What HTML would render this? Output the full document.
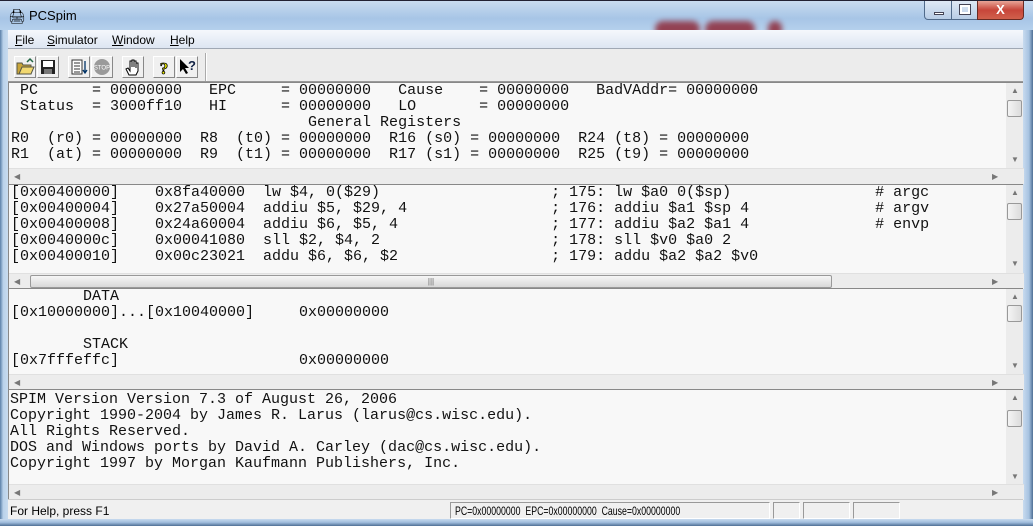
<!DOCTYPE html>
<html><head><meta charset="utf-8">
<style>
*{margin:0;padding:0;box-sizing:border-box}
body{width:1033px;height:526px;overflow:hidden;background:#a9c6e4;font-family:"Liberation Sans",sans-serif;position:relative}
.abs{position:absolute}
#title{left:0;top:0;width:1033px;height:30px;background:linear-gradient(#c9dcf0,#a7c5e6 60%,#b5d0ec);border-top:1px solid #223;overflow:hidden}
#frameL{left:0;top:30px;width:8px;height:496px;background:linear-gradient(90deg,#5a7fa8,#b9d1ea 40%,#c8dbef)}
#frameR{left:1023px;top:30px;width:10px;height:496px;background:linear-gradient(90deg,#c8dbef,#a6c2e0 60%,#4e6f95)}
#frameB{left:0;top:519px;width:1033px;height:7px;background:linear-gradient(#c8dbef,#9fbcdc,#4e6f95)}
#menu{left:8px;top:30px;width:1015px;height:19px;background:linear-gradient(#f5f8fc,#dde6f2);border-bottom:1px solid #a0a8b4;font-size:12px;color:#000}
#menu span{position:absolute;top:3px}
#tool{left:8px;top:49px;width:1015px;height:33px;background:#ececec;border-bottom:1px solid #999}
.btn{position:absolute;top:7px;width:22px;height:22px;background:#f0f0f0;border:1px solid;border-color:#fff #888 #888 #fff}
.pane{position:absolute;left:8px;width:1015px;background:#f8f8f8;border-left:1px solid #888;border-top:1px solid #888}
.txt{position:absolute;left:2px;font-family:"Liberation Mono",monospace;font-size:15px;line-height:16px;white-space:pre;color:#111}
.vs{position:absolute;right:0;top:0;width:17px;background:#ececec}
.hs{position:absolute;left:0;width:1015px;height:16px;background:#ececec;border-top:1px solid #e0e0e0}
.arr{position:absolute;font-size:8px;color:#777}
.thumb{position:absolute;right:1px;width:15px;height:17px;background:linear-gradient(90deg,#f4f4f4,#dcdcdc);border:1px solid #999;border-radius:2px}
#status{left:8px;top:499px;width:1015px;height:20px;background:#f0f0f0;border-top:1px solid #ccc;font-size:12px}
.cell{position:absolute;top:2px;height:17px;border:1px solid;border-color:#999 #fff #fff #999}
</style></head><body>
<div id="title" class="abs">
 <div class="abs" style="left:8px;top:7px;font-size:14px">&#x1F5A8;</div>
 <div class="abs" style="left:29px;top:7px;font-size:13px;color:#000">PCSpim</div>
 <div class="abs" style="left:655px;top:20px;width:45px;height:16px;background:#8b1f2d;border-radius:8px;filter:blur(3px);opacity:.8"></div>
 <div class="abs" style="left:705px;top:20px;width:50px;height:16px;background:#8b1f2d;border-radius:8px;filter:blur(3px);opacity:.8"></div>
 <div class="abs" style="left:768px;top:20px;width:14px;height:16px;background:#8b1f2d;border-radius:7px;filter:blur(3px);opacity:.8"></div>
 <div class="abs" style="left:924px;top:0;width:28px;height:19px;border:1px solid #506a8a;border-top:none;border-radius:0 0 0 4px;background:linear-gradient(#dfe9f5,#b8cde6)"><div class="abs" style="left:9px;top:11px;width:10px;height:3px;background:#fff;border:1px solid #445"></div></div>
 <div class="abs" style="left:951px;top:0;width:27px;height:19px;border:1px solid #506a8a;border-top:none;background:linear-gradient(#dfe9f5,#b8cde6)"><div class="abs" style="left:8px;top:4px;width:10px;height:9px;border:2px solid #fff;outline:1px solid #445"></div></div>
 <div class="abs" style="left:977px;top:0;width:47px;height:19px;border:1px solid #6a2a22;border-top:none;border-radius:0 0 4px 0;background:linear-gradient(#e8a597,#c7463a 50%,#d0604c);color:#fff;font-weight:bold;font-size:13px;text-align:center;line-height:17px">X</div>
</div>
<div id="frameL" class="abs"></div><div id="frameR" class="abs"></div><div id="frameB" class="abs"></div>
<div id="menu" class="abs">
 <span style="left:7px"><u>F</u>ile</span><span style="left:39px"><u>S</u>imulator</span><span style="left:104px"><u>W</u>indow</span><span style="left:162px"><u>H</u>elp</span>
</div>
<div id="tool" class="abs">
 <div class="btn" style="left:6px"><svg width="20" height="20"><path d="M2 6h5l1 2h8v9H2z" fill="#c9a53a" stroke="#554"/><path d="M4 17l3-7h12l-3 7z" fill="#f2d870" stroke="#554"/><path d="M12 5l3-3 3 3" fill="none" stroke="#264" stroke-width="1.5"/></svg></div>
 <div class="btn" style="left:29px"><svg width="20" height="20"><rect x="3" y="3" width="14" height="14" fill="#222"/><rect x="5" y="4" width="10" height="6" fill="#fff"/><rect x="6" y="12" width="8" height="5" fill="#777"/></svg></div>
 <div class="btn" style="left:60px"><svg width="20" height="20"><rect x="3" y="3" width="10" height="14" fill="#fff" stroke="#333"/><path d="M5 6h6M5 9h6M5 12h6M5 15h6" stroke="#333"/><path d="M16 4v12M14 13l2 3 2-3" stroke="#036" fill="none" stroke-width="1.3"/></svg></div>
 <div class="btn" style="left:83px"><svg width="20" height="20"><circle cx="10" cy="10" r="8" fill="#9a9a9a"/><text x="10" y="12.5" font-size="6" fill="#fff" text-anchor="middle" font-family="Liberation Sans">STOP</text></svg></div>
 <div class="btn" style="left:114px"><svg width="20" height="20"><path d="M6 18l-3-6 2-1 2 3V4h2v6V3h2v7V4h2v7V6h2v8l-2 4z" fill="#fff" stroke="#000"/></svg></div>
 <div class="btn" style="left:145px"><svg width="20" height="20"><text x="10" y="17" font-size="17" font-weight="bold" fill="#ee0" stroke="#000" stroke-width=".8" text-anchor="middle" font-family="Liberation Serif">?</text></svg></div>
 <div class="btn" style="left:168px"><svg width="20" height="20"><path d="M3 2v13l3-3 3 5 2-1-3-5h4z" fill="#000"/><text x="15" y="13" font-size="13" font-weight="bold" fill="#124" text-anchor="middle" font-family="Liberation Sans">?</text></svg></div>
 <div class="abs" style="left:197px;top:4px;width:2px;height:28px;border-left:1px solid #aaa;border-right:1px solid #fff"></div>
</div>

<div class="pane" style="top:82px;height:102px">
 <div class="txt" style="top:0px"> PC      = 00000000   EPC     = 00000000   Cause    = 00000000   BadVAddr= 00000000
 Status  = 3000ff10   HI      = 00000000   LO       = 00000000
                                 General Registers
R0  (r0) = 00000000  R8  (t0) = 00000000  R16 (s0) = 00000000  R24 (t8) = 00000000
R1  (at) = 00000000  R9  (t1) = 00000000  R17 (s1) = 00000000  R25 (t9) = 00000000</div>
 <div class="vs" style="height:85px"><span class="arr" style="left:5px;top:3px">&#9650;</span><div class="thumb" style="top:17px"></div><span class="arr" style="left:5px;top:72px">&#9660;</span></div>
 <div class="hs" style="top:85px"><span class="arr" style="left:5px;top:3px">&#9664;</span><span class="arr" style="left:983px;top:3px">&#9654;</span></div>
</div>
<div class="pane" style="top:184px;height:104px">
 <div class="txt" style="top:0px">[0x00400000]    0x8fa40000  lw $4, 0($29)                   ; 175: lw $a0 0($sp)                # argc
[0x00400004]    0x27a50004  addiu $5, $29, 4                ; 176: addiu $a1 $sp 4              # argv
[0x00400008]    0x24a60004  addiu $6, $5, 4                 ; 177: addiu $a2 $a1 4              # envp
[0x0040000c]    0x00041080  sll $2, $4, 2                   ; 178: sll $v0 $a0 2
[0x00400010]    0x00c23021  addu $6, $6, $2                 ; 179: addu $a2 $a2 $v0</div>
 <div class="vs" style="height:88px"><span class="arr" style="left:5px;top:3px">&#9650;</span><div class="thumb" style="top:18px"></div><span class="arr" style="left:5px;top:74px">&#9660;</span></div>
 <div class="hs" style="top:88px"><span class="arr" style="left:5px;top:3px">&#9664;</span><div class="abs" style="left:21px;top:1px;width:802px;height:13px;background:linear-gradient(#f6f6f6,#d8d8d8);border:1px solid #999;border-radius:2px;font-size:8px;text-align:center;color:#666;line-height:11px">|||</div><span class="arr" style="left:983px;top:3px">&#9654;</span></div>
</div>
<div class="pane" style="top:288px;height:101px">
 <div class="txt" style="top:0px">        DATA
[0x10000000]...[0x10040000]     0x00000000

        STACK
[0x7fffeffc]                    0x00000000</div>
 <div class="vs" style="height:85px"><span class="arr" style="left:5px;top:3px">&#9650;</span><div class="thumb" style="top:16px"></div><span class="arr" style="left:5px;top:72px">&#9660;</span></div>
 <div class="hs" style="top:85px"><span class="arr" style="left:5px;top:3px">&#9664;</span><span class="arr" style="left:983px;top:3px">&#9654;</span></div>
</div>
<div class="pane" style="top:389px;height:110px">
 <div class="txt" style="top:2px;left:1px">SPIM Version Version 7.3 of August 26, 2006
Copyright 1990-2004 by James R. Larus (larus@cs.wisc.edu).
All Rights Reserved.
DOS and Windows ports by David A. Carley (dac@cs.wisc.edu).
Copyright 1997 by Morgan Kaufmann Publishers, Inc.</div>
 <div class="vs" style="height:94px"><span class="arr" style="left:5px;top:3px">&#9650;</span><div class="thumb" style="top:20px"></div><span class="arr" style="left:5px;top:82px">&#9660;</span></div>
 <div class="hs" style="top:94px"><span class="arr" style="left:5px;top:3px">&#9664;</span><span class="arr" style="left:983px;top:3px">&#9654;</span></div>
</div>
<div id="status" class="abs">
 <span class="abs" style="left:2px;top:4px">For Help, press F1</span>
 <div class="cell" style="left:442px;width:320px"></div>
 <span class="abs" style="left:447px;top:4px;font-size:12px;transform:scaleX(0.73);transform-origin:0 0;white-space:nowrap">PC=0x00000000&nbsp; EPC=0x00000000&nbsp; Cause=0x00000000</span>
 <div class="cell" style="left:765px;width:27px"></div>
 <div class="cell" style="left:795px;width:47px"></div>
 <div class="cell" style="left:845px;width:47px"></div>
</div>
</body></html>
